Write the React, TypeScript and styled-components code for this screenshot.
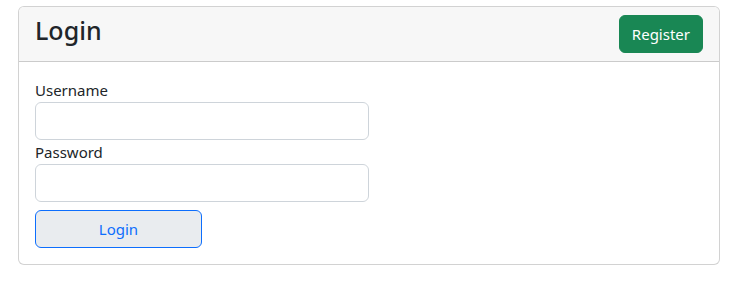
import React from 'react';
import { styled, createGlobalStyle } from 'styled-components';

const GlobalStyle = createGlobalStyle`
    * {
        box-sizing: border-box;
    }
    body {
        margin: 0;
        background: #fff;
        color: #212529;
        font-family: 'Noto Sans', 'Open Sans', sans-serif;
        font-size: 16px;
        line-height: 1.5;
    }
`;

const Page = styled.div`
    padding: 6px 14px 0 18px;
`;

const Card = styled.div`
    border: 1px solid rgba(0, 0, 0, 0.175);
    border-radius: 6px;
    background: #fff;
    overflow: hidden;
`;

const CardHeader = styled.div`
    display: flex;
    align-items: center;
    justify-content: space-between;
    padding: 8px 16px;
    background: #f7f7f7;
    border-bottom: 1px solid rgba(0, 0, 0, 0.175);
`;

const Title = styled.h3`
    margin: 0 0 8px;
    font-size: 25px;
    font-weight: 500;
    line-height: 1.2;
`;

const Button = styled.button<{ $variant: 'success' | 'light' }>`
    font-family: inherit;
    font-size: 15px;
    line-height: 24px;
    padding: 6px 12px;
    border-radius: 6px;
    cursor: pointer;
    border: 1px solid ${(p) => (p.$variant === 'success' ? '#198754' : '#0d6efd')};
    background: ${(p) => (p.$variant === 'success' ? '#198754' : '#e9ecef')};
    color: ${(p) => (p.$variant === 'success' ? '#fff' : '#0d6efd')};
`;

const CardBody = styled.form`
    display: flex;
    flex-direction: column;
    align-items: flex-start;
    padding: 16px;
`;

const Label = styled.label`
    display: block;
    font-size: 15px;
    line-height: 24px;
`;

const Input = styled.input`
    display: block;
    width: 50%;
    height: 38px;
    padding: 6px 12px;
    font-family: inherit;
    font-size: 16px;
    border: 1px solid #ced4da;
    border-radius: 6px;
    outline: none;
`;

const SubmitButton = styled(Button)`
    width: 25%;
    margin-top: 8px;
`;

export default function App() {
    return (
        <>
            <GlobalStyle />
            <Page>
                <Card>
                    <CardHeader>
                        <Title>Login</Title>
                        <Button $variant="success" type="button">Register</Button>
                    </CardHeader>
                    <CardBody onSubmit={(e) => e.preventDefault()}>
                        <Label htmlFor="username">Username</Label>
                        <Input id="username" type="text" />
                        <Label htmlFor="password">Password</Label>
                        <Input id="password" type="password" />
                        <SubmitButton $variant="light" type="submit">Login</SubmitButton>
                    </CardBody>
                </Card>
            </Page>
        </>
    );
}
